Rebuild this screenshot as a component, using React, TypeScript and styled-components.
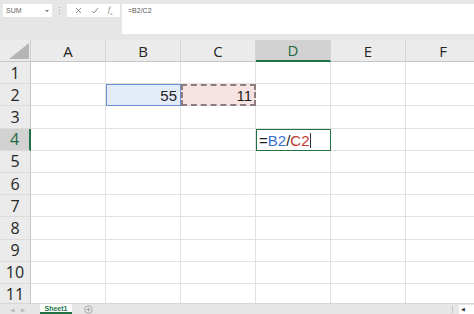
import React from 'react';
import styled, { createGlobalStyle, css } from 'styled-components';

const GlobalStyle = createGlobalStyle`
  html, body { margin: 0; padding: 0; background: #fff; }
  body { width: 474px; height: 314px; overflow: hidden; }
`;

const GREEN = '#217346';

const Window = styled.div`
  width: 474px;
  height: 314px;
  display: flex;
  flex-direction: column;
  overflow: hidden;
  background: #fff;
  font-family: "Open Sans", "Liberation Sans", sans-serif;
`;

const FormulaBar = styled.div`
  height: 40px;
  flex: none;
  background: #e6e6e6;
  display: flex;
  align-items: flex-start;
  padding: 4px 0 0 3px;
  box-sizing: border-box;
`;

const NameBox = styled.div`
  width: 49px;
  height: 13px;
  background: #fff;
  display: flex;
  align-items: center;
  justify-content: space-between;
  padding: 0 3px;
  box-sizing: border-box;
  font: 7px "Liberation Sans", sans-serif;
  color: #666;
`;

const Caret = styled.span`
  width: 0;
  height: 0;
  border-left: 2px solid transparent;
  border-right: 2px solid transparent;
  border-top: 2px solid #777;
`;

const Grip = styled.div`
  width: 14px;
  height: 13px;
  display: flex;
  flex-direction: column;
  align-items: center;
  justify-content: center;
  gap: 2px;
  span {
    width: 1px;
    height: 1px;
    background: #aaa;
  }
`;

const FxBox = styled.div`
  width: 53px;
  height: 13px;
  background: #fff;
  margin-left: 1px;
  display: flex;
  align-items: center;
  justify-content: space-around;
  padding: 0 3px;
  box-sizing: border-box;
  color: #777;
`;

const FxText = styled.span`
  font: italic 8px "Liberation Serif", serif;
  color: #777;
  sub { font-size: 5px; }
`;

const FormulaInput = styled.div`
  flex: 1;
  height: 30px;
  margin-left: 2px;
  background: #fff;
  padding: 3px 6px;
  box-sizing: border-box;
  font: 7px "Liberation Sans", sans-serif;
  color: #555;
`;

const Sheet = styled.div`
  flex: 1;
  min-height: 0;
  display: grid;
  grid-template-columns: 31px repeat(6, 75px);
  grid-template-rows: 22px repeat(11, 22.2px);
  align-content: start;
  overflow: hidden;
`;

const Corner = styled.div`
  background: #ebebeb;
  border-right: 1px solid #cfcfcf;
  border-bottom: 1px solid #c6c6c6;
  box-sizing: border-box;
  display: flex;
  justify-content: flex-end;
  align-items: flex-end;
  padding: 0 1px 2px 0;
`;

const Triangle = styled.div`
  width: 20px;
  height: 16px;
  background: #b4b4b4;
  clip-path: polygon(100% 0, 100% 100%, 0 100%);
`;

const ColHeader = styled.div<{ $active?: boolean }>`
  background: #ebebeb;
  border-right: 1px solid #d4d4d4;
  border-bottom: 1px solid #c6c6c6;
  box-sizing: border-box;
  display: flex;
  align-items: center;
  justify-content: center;
  font-size: 15px;
  color: #262626;
  ${(p) =>
    p.$active &&
    css`
      background: #d2d2d2;
      color: #1d6b40;
      border-bottom: 2px solid ${GREEN};
    `}
`;

const RowHeader = styled.div<{ $active?: boolean }>`
  background: #ebebeb;
  border-right: 1px solid #c6c6c6;
  border-bottom: 1px solid #dcdcdc;
  box-sizing: border-box;
  display: flex;
  align-items: center;
  justify-content: center;
  font-size: 16px;
  color: #262626;
  ${(p) =>
    p.$active &&
    css`
      background: #d2d2d2;
      color: #1d6b40;
      border-right: 2px solid ${GREEN};
    `}
`;

type Variant = 'plain' | 'refBlue' | 'refRed' | 'editing';

const Cell = styled.div<{ $variant: Variant }>`
  border-right: 1px solid #e1e1e1;
  border-bottom: 1px solid #e1e1e1;
  box-sizing: border-box;
  display: flex;
  align-items: center;
  justify-content: flex-end;
  padding: 2px 3px 0;
  font: 15px "Liberation Sans", Arial, sans-serif;
  color: #222;
  ${(p) =>
    p.$variant === 'refBlue' &&
    css`
      background: #e3ebf8;
      outline: 1px solid #6a8fd0;
      outline-offset: -1px;
    `}
  ${(p) =>
    p.$variant === 'refRed' &&
    css`
      background: #f8e3e3;
      outline: 2px dashed #8e7d7d;
      outline-offset: -2px;
    `}
  ${(p) =>
    p.$variant === 'editing' &&
    css`
      justify-content: flex-start;
      outline: 1px solid ${GREEN};
      outline-offset: -1px;
    `}
`;

const Ref = styled.span<{ $color: string }>`
  color: ${(p) => p.$color};
`;

const Cursor = styled.span`
  display: inline-block;
  width: 1px;
  height: 15px;
  background: #333;
  margin-left: 1px;
`;

const TabBar = styled.div`
  height: 11px;
  flex: none;
  background: #e6e6e6;
  border-top: 1px solid #d6d6d6;
  box-sizing: border-box;
  display: flex;
  align-items: stretch;
`;

const NavArrows = styled.div`
  width: 40px;
  display: flex;
  align-items: center;
  gap: 6px;
  padding-left: 10px;
  box-sizing: border-box;
  font: 6px "DejaVu Sans", sans-serif;
  color: #bdbdbd;
`;

const SheetTab = styled.div`
  width: 32px;
  background: #fff;
  border-bottom: 2px solid ${GREEN};
  box-sizing: border-box;
  display: flex;
  align-items: center;
  justify-content: center;
  font: bold 7px "Liberation Sans", sans-serif;
  color: ${GREEN};
`;

const AddSheet = styled.div`
  margin-left: 12px;
  display: flex;
  align-items: center;
`;

const Spacer = styled.div`
  flex: 1;
`;

const ScrollStart = styled.div`
  display: flex;
  align-items: center;
  gap: 6px;
  padding-right: 0;
`;

const ScrollDivider = styled.span`
  width: 1px;
  height: 7px;
  background: #c4c4c4;
`;

const ScrollThumb = styled.span`
  width: 15px;
  height: 9px;
  background: #fff;
  display: flex;
  align-items: center;
  padding-left: 2px;
  box-sizing: border-box;
  font: 5px "DejaVu Sans", sans-serif;
  color: #333;
`;

const columns = ['A', 'B', 'C', 'D', 'E', 'F'];

const cellData: Record<string, { variant: Variant; content?: React.ReactNode }> = {
  B2: { variant: 'refBlue', content: '55' },
  C2: { variant: 'refRed', content: '11' },
  D4: {
    variant: 'editing',
    content: (
      <>
        =<Ref $color="#3a6fce">B2</Ref>/<Ref $color="#c0392b">C2</Ref>
        <Cursor />
      </>
    ),
  },
};

export default function App() {
  const rows = Array.from({ length: 11 }, (_, i) => i + 1);
  return (
    <>
      <GlobalStyle />
      <Window>
        <FormulaBar>
          <NameBox>
            SUM
            <Caret />
          </NameBox>
          <Grip>
            <span />
            <span />
            <span />
          </Grip>
          <FxBox>
            <svg width="7" height="7" viewBox="0 0 7 7">
              <path d="M1 1 L6 6 M6 1 L1 6" stroke="#808080" strokeWidth="0.9" />
            </svg>
            <svg width="8" height="7" viewBox="0 0 8 7">
              <path d="M1 4 L3 6 L7 1" stroke="#808080" strokeWidth="0.9" fill="none" />
            </svg>
            <FxText>
              f<sub>x</sub>
            </FxText>
          </FxBox>
          <FormulaInput>=B2/C2</FormulaInput>
        </FormulaBar>
        <Sheet>
          <Corner>
            <Triangle />
          </Corner>
          {columns.map((c) => (
            <ColHeader key={c} $active={c === 'D'}>
              {c}
            </ColHeader>
          ))}
          {rows.map((r) => (
            <React.Fragment key={r}>
              <RowHeader $active={r === 4}>{r}</RowHeader>
              {columns.map((c) => {
                const d = cellData[`${c}${r}`];
                return (
                  <Cell key={c} $variant={d ? d.variant : 'plain'}>
                    {d?.content}
                  </Cell>
                );
              })}
            </React.Fragment>
          ))}
        </Sheet>
        <TabBar>
          <NavArrows>
            <span>◀</span>
            <span>▶</span>
          </NavArrows>
          <SheetTab>Sheet1</SheetTab>
          <AddSheet>
            <svg width="9" height="9" viewBox="0 0 9 9">
              <circle cx="4.5" cy="4.5" r="3.8" stroke="#9a9a9a" strokeWidth="0.8" fill="none" />
              <path d="M4.5 2.5 V6.5 M2.5 4.5 H6.5" stroke="#9a9a9a" strokeWidth="0.8" />
            </svg>
          </AddSheet>
          <Spacer />
          <ScrollStart>
            <ScrollDivider />
            <ScrollThumb>◀</ScrollThumb>
          </ScrollStart>
        </TabBar>
      </Window>
    </>
  );
}
